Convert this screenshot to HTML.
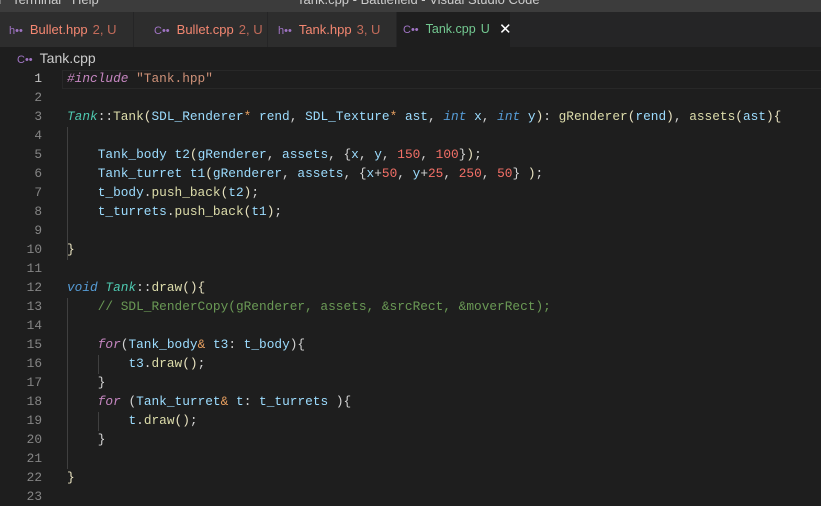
<!DOCTYPE html><html><head><style>
body{margin:0;width:821px;height:493px;background:#1e1e1e;overflow:hidden;font-family:"Liberation Sans",sans-serif;position:relative}
.title{position:absolute;left:0;top:0;width:821px;height:12px;background:#3c3c3c;overflow:hidden}
.title span{position:absolute;top:-8px;font-size:13px;color:#ccc}
.tabs{position:absolute;top:12px;left:0;width:821px;height:35px;background:#252526}
.tab{position:absolute;top:0;height:35px;background:#2d2d2d;font-size:13px;line-height:35px;color:#f48771;border-right:1px solid #252526;box-sizing:border-box;white-space:nowrap;overflow:hidden}
.tab i{font-style:normal;color:#a074c4;font-size:11px;margin-right:7px}
.tab b{font-weight:normal;color:#c26b5a;margin-left:5px}
.x{position:absolute;left:499px;top:12px;height:35px;line-height:35px;color:#fff;font-size:15px}
.crumb{position:absolute;top:47px;left:17px;font-size:14px;color:#ccc;line-height:22px}
.crumb i{font-style:normal;color:#a074c4;font-size:11px;margin-right:7px}
.cur{position:absolute;left:62px;top:70px;width:759px;height:17px;border:1px solid #282828}
.ln{position:absolute;left:0;width:42px;text-align:right;font:12.8px "Liberation Mono",monospace;color:#858585;height:19px;line-height:19px}
.code{position:absolute;left:67px;font:12.8px "Liberation Mono",monospace;color:#d4d4d4;white-space:pre;height:19px;line-height:19px}
.k{color:#c586c0;font-style:italic}.s{color:#ce9178}.c{color:#4ec9b0;font-style:italic}.f{color:#dcdcaa}.v{color:#9cdcfe}.n{color:#f47067}.b{color:#569cd6;font-style:italic}.m{color:#6a9955}.p{color:#e8e2c0}.o{color:#d4d4d4}.a{color:#e8a060}
.g{position:absolute;width:1px;background:#404040}
</style></head><body>
<div class="title"><span style="left:-6px">n&nbsp;&nbsp;&nbsp;Terminal&nbsp;&nbsp;&nbsp;Help</span><span style="left:297px">Tank.cpp - Battlefield - Visual Studio Code</span></div>
<div class="tabs">
<div class="tab" style="left:0;width:134px;padding-left:9px"><i>h••</i>Bullet.hpp<b>2, U</b></div>
<div class="tab" style="left:134px;width:134px;padding-left:20px"><i>C••</i>Bullet.cpp<b>2, U</b></div>
<div class="tab" style="left:268px;width:129px;padding-left:10px"><i>h••</i>Tank.hpp<b>3, U</b></div>
<div class="tab" style="left:397px;width:114px;padding-left:6px;font-size:12.5px;background:#1e1e1e;color:#73c991"><i>C••</i>Tank.cpp<b style="color:#73c991">U</b></div>
</div>
<div class="x">✕</div>
<div class="crumb"><i>C••</i>Tank.cpp</div>
<div class="cur"></div>
<div class="g" style="left:67px;top:127px;height:133px"></div>
<div class="g" style="left:67px;top:298px;height:171px"></div>
<div class="g" style="left:98px;top:355px;height:19px"></div>
<div class="g" style="left:98px;top:412px;height:19px"></div>
<div id="c"></div>
<script>
var L=[
'<span class="k">#include</span> <span class="s">"Tank.hpp"</span>',
'',
'<span class="c">Tank</span>::<span class="f">Tank</span><span class="p">(</span><span class="v">SDL_Renderer</span><span class="a">*</span> <span class="v">rend</span>, <span class="v">SDL_Texture</span><span class="a">*</span> <span class="v">ast</span>, <span class="b">int</span> <span class="v">x</span>, <span class="b">int</span> <span class="v">y</span><span class="p">)</span>: <span class="f">gRenderer</span><span class="p">(</span><span class="v">rend</span><span class="p">)</span>, <span class="f">assets</span><span class="p">(</span><span class="v">ast</span><span class="p">){</span>',
'',
'    <span class="v">Tank_body t2</span><span class="p">(</span><span class="v">gRenderer</span>, <span class="v">assets</span>, <span class="o">{</span><span class="v">x</span>, <span class="v">y</span>, <span class="n">150</span>, <span class="n">100</span><span class="o">}</span><span class="p">)</span>;',
'    <span class="v">Tank_turret t1</span><span class="p">(</span><span class="v">gRenderer</span>, <span class="v">assets</span>, <span class="o">{</span><span class="v">x</span>+<span class="n">50</span>, <span class="v">y</span>+<span class="n">25</span>, <span class="n">250</span>, <span class="n">50</span><span class="o">}</span> <span class="p">)</span>;',
'    <span class="v">t_body</span>.<span class="f">push_back</span><span class="p">(</span><span class="v">t2</span><span class="p">)</span>;',
'    <span class="v">t_turrets</span>.<span class="f">push_back</span><span class="p">(</span><span class="v">t1</span><span class="p">)</span>;',
'',
'<span class="p">}</span>',
'',
'<span class="b">void</span> <span class="c">Tank</span>::<span class="f">draw</span><span class="p">(){</span>',
'    <span class="m">// SDL_RenderCopy(gRenderer, assets, &amp;srcRect, &amp;moverRect);</span>',
'',
'    <span class="k">for</span><span class="o">(</span><span class="v">Tank_body</span><span class="a">&amp;</span> <span class="v">t3</span>: <span class="v">t_body</span><span class="o">){</span>',
'        <span class="v">t3</span>.<span class="f">draw</span><span class="p">()</span>;',
'    <span class="o">}</span>',
'    <span class="k">for</span> <span class="o">(</span><span class="v">Tank_turret</span><span class="a">&amp;</span> <span class="v">t</span>: <span class="v">t_turrets</span> <span class="o">){</span>',
'        <span class="v">t</span>.<span class="f">draw</span><span class="p">()</span>;',
'    <span class="o">}</span>',
'',
'<span class="p">}</span>',
''];
var h='';for(var i=0;i<L.length;i++){var t=69+i*19;h+='<div class="ln" style="top:'+t+'px'+(i==0?';color:#c6c6c6':'')+'">'+(i+1)+'</div><div class="code" style="top:'+t+'px">'+L[i]+'</div>';}
document.getElementById('c').innerHTML=h;
</script>
</body></html>
